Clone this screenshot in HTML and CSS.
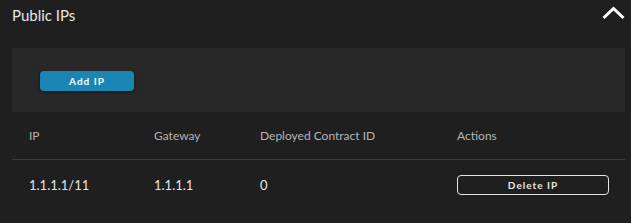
FILE: index.html
```html
<!DOCTYPE html>
<html>
	<head>
		<meta http-equiv="content-type" content="text/html; charset=utf-8">
		<title>Public IPs</title>
		<link rel="stylesheet" href="styles.css">
	</head>
	<body>
		<div class="section">
			<div class="section-head">
				<span class="section-title">Public IPs</span>
				<svg class="chevron" width="23" height="14" viewBox="0 0 23 14">
					<path d="M1.5 12 L11.5 2.5 L21.5 12" fill="none" stroke="#ffffff" stroke-width="3"/>
				</svg>
			</div>

			<div class="toolbar">
				<button class="btn-add">Add IP</button>
			</div>

			<div class="table">
				<div class="row head">
					<div>IP</div>
					<div>Gateway</div>
					<div>Deployed Contract ID</div>
					<div>Actions</div>
				</div>
				<div class="row body">
					<div>1.1.1.1/11</div>
					<div>1.1.1.1</div>
					<div>0</div>
					<div><button class="btn-delete">Delete IP</button></div>
				</div>
			</div>
		</div>
	</body>
</html>
```

FILE: styles.css
```css
body {
	margin: 0px;
	padding: 0px;
	background-color: #1f1f1f;
	font-family: Lato, "Liberation Sans", sans-serif;
	color: #e6e6e6;
}

.section {
	padding: 0 6px 0 12px;
}

.section-head {
	display: flex;
	justify-content: space-between;
	align-items: flex-start;
	height: 48px;
}

.section-title {
	font-size: 15px;
	margin-top: 6px;
	color: #e8e8e8;
}

.chevron {
	margin-top: 6px;
}

.toolbar {
	background-color: #282828;
	height: 64px;
	padding: 23px 0 0 28px;
	box-sizing: border-box;
}

.btn-add {
	display: block;
	width: 94px;
	height: 20px;
	border: none;
	border-radius: 4px;
	background-color: #1a86b5;
	color: #ffffff;
	font-family: Lato, "Liberation Sans", sans-serif;
	font-weight: bold;
	font-size: 10px;
	letter-spacing: 1px;
	box-shadow: 0 1px 3px rgba(0, 0, 0, 0.5);
	padding: 0;
}

.row {
	display: grid;
	grid-template-columns: 125px 106px 197px 1fr;
	padding-left: 17px;
	align-items: center;
}

.row.head {
	height: 47px;
	font-size: 12px;
	color: #b4b4b4;
	border-bottom: 1px solid #3c3c3c;
}

.row.body {
	height: 50px;
	font-size: 13px;
	color: #e6e6e6;
}

.btn-delete {
	display: block;
	width: 152px;
	height: 20px;
	border: 1px solid #e6e6e6;
	border-radius: 4px;
	background: transparent;
	color: #e6e6e6;
	font-family: Lato, "Liberation Sans", sans-serif;
	font-weight: bold;
	font-size: 10px;
	letter-spacing: 1px;
	padding: 0;
}
```
